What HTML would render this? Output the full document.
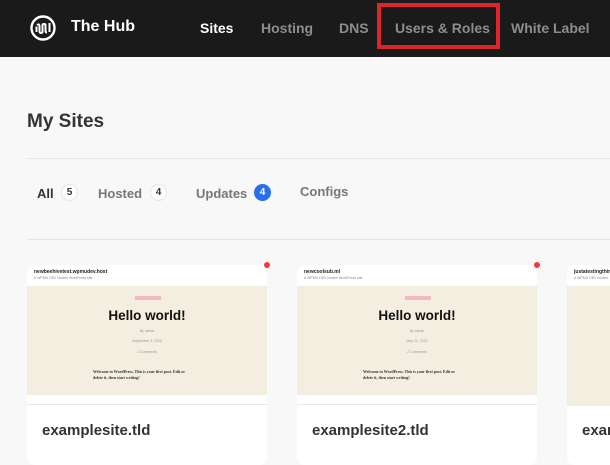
<!DOCTYPE html>
<html><head><meta charset="utf-8"><style>
*{margin:0;padding:0;box-sizing:border-box}
body{width:610px;height:449px;overflow:hidden;background:#f8f8f8;font-family:"Liberation Sans",sans-serif;position:relative}
.hdr{position:absolute;left:0;top:0;width:610px;height:57px;background:#1a1a1a}
.hdr .t{position:absolute;font-weight:bold;font-size:14px;color:#8d8d8d;top:20px}
.red{position:absolute;left:377px;top:3px;width:123px;height:46px;border:4px solid #e0222a}
.div{position:absolute;left:27px;right:0;height:1px;background:#e6e6e6}
.tab{position:absolute;top:186px;font-size:13px;font-weight:bold;color:#777}
.bd{position:absolute;top:184px;width:17px;height:17px;border-radius:50%;background:#fff;border:1px solid #e6e6e6;font-size:10px;text-align:center;line-height:15px;color:#333;font-weight:bold}
.card{position:absolute;top:265px;width:240px;height:200px;background:#fff;border-radius:8px;overflow:hidden}
.card .pv{position:absolute;left:0;top:21px;width:100%;height:109px;background:#f4eee0}
.card .sep{position:absolute;left:0;top:139px;width:100%;height:1px;background:#e8e8e8}
.card .nm{position:absolute;left:15px;top:157px;font-size:15px;font-weight:bold;color:#333}
.card .s1{position:absolute;left:7px;top:4px;font-size:5px;font-weight:bold;color:#222}
.card .s2{position:absolute;left:7px;top:11px;font-size:3.5px;color:#888}
.hw{position:absolute;left:0;width:100%;top:22px;text-align:center;font-size:13.5px;font-weight:bold;color:#111}
.tag{position:absolute;left:108px;top:10px;width:26px;height:4px;background:#f3b8c0}
.meta{position:absolute;left:0;width:100%;text-align:center;font-size:3.5px;color:#999}
.body{position:absolute;left:66px;top:83px;font-size:4px;color:#333;font-family:"Liberation Serif",serif;font-weight:bold;line-height:6px}
.dot{position:absolute;top:262px;width:6px;height:6px;border-radius:50%;background:#f03c3c}
</style></head><body>
<div class="hdr">
<svg style="position:absolute;left:29px;top:14px" width="28" height="28" viewBox="0 0 28 28"><circle cx="14" cy="14" r="11.5" fill="none" stroke="#fff" stroke-width="2.4"/><path d="M7.5 18V12.5M8 11q2.5-2 2.5 2v4.5q0 1.5 1.5 1.5t1.5-1.5V11q0-1 1.5-1t1.5 1v6q0 1.5 1.5 1.5M20.5 9v9" fill="none" stroke="#fff" stroke-width="2"/></svg>
<div class="t" style="left:71px;top:18px;font-size:16px;color:#fff">The Hub</div>
<div class="t" style="left:200px;color:#fff">Sites</div>
<div class="t" style="left:261px">Hosting</div>
<div class="t" style="left:339px">DNS</div>
<div class="t" style="left:395px">Users &amp; Roles</div>
<div class="t" style="left:511px">White Label</div>
<div class="red"></div>
</div>
<div style="position:absolute;left:27px;top:111px;font-size:19px;font-weight:bold;color:#333">My Sites</div>
<div class="div" style="top:158px"></div>
<div class="div" style="top:239px"></div>
<div class="tab" style="left:37px;color:#333">All</div><div class="bd" style="left:61px">5</div>
<div class="tab" style="left:98px">Hosted</div><div class="bd" style="left:150px">4</div>
<div class="tab" style="left:196px">Updates</div><div class="bd" style="left:254px;background:#286ef1;border-color:#286ef1;color:#fff">4</div>
<div class="tab" style="left:300px;top:184px">Configs</div>

<div class="card" style="left:27px"><div class="s1">newbeehivetest.wpmudev.host</div><div class="s2">A WPMU DEV hosted WordPress site</div>
<div class="pv"><div class="tag"></div><div class="hw">Hello world!</div><div class="meta" style="top:43px">By admin</div><div class="meta" style="top:53px">September 3, 2020</div><div class="meta" style="top:64px">2 Comments</div><div class="body">Welcome to WordPress. This is your first post. Edit or<br>delete it, then start writing!</div></div>
<div class="sep"></div><div class="nm">examplesite.tld</div></div>
<div class="dot" style="left:264px"></div>

<div class="card" style="left:297px"><div class="s1">newcoolsub.ml</div><div class="s2">A WPMU DEV hosted WordPress site</div>
<div class="pv"><div class="tag"></div><div class="hw">Hello world!</div><div class="meta" style="top:43px">By admin</div><div class="meta" style="top:53px">May 21, 2020</div><div class="meta" style="top:64px">2 Comments</div><div class="body">Welcome to WordPress. This is your first post. Edit or<br>delete it, then start writing!</div></div>
<div class="sep"></div><div class="nm">examplesite2.tld</div></div>
<div class="dot" style="left:534px"></div>

<div class="card" style="left:567px"><div class="s1">justatestingthing</div><div class="s2">A WPMU DEV hosted</div>
<div class="pv" style="height:120px"></div>
<div class="nm">exam</div></div>
</body></html>
